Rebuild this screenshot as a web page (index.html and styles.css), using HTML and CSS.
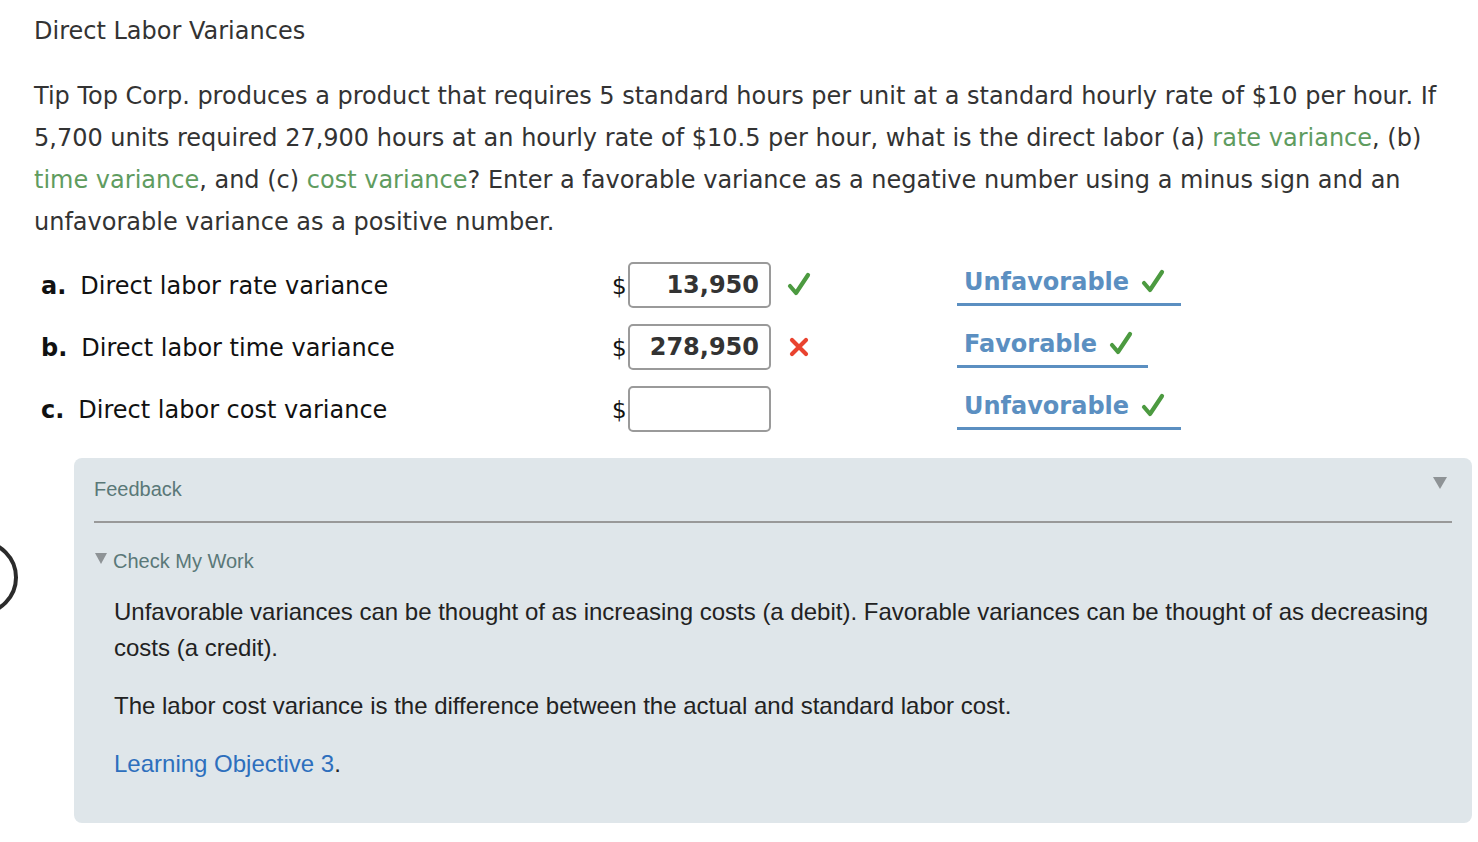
FILE: index.html
```html
<!DOCTYPE html>
<html>
<head>
<meta charset="utf-8">
<link rel="stylesheet" href="styles.css">
</head>
<body>
<div class="page">
  <h1 class="title">Direct Labor Variances</h1>
  <p class="question">Tip Top Corp. produces a product that requires 5 standard hours per unit at a standard hourly rate of $10 per hour. If 5,700 units required 27,900 hours at an hourly rate of $10.5 per hour, what is the direct labor (a) <span class="term">rate variance</span>, (b) <span class="term">time variance</span>, and (c) <span class="term">cost variance</span>? Enter a favorable variance as a negative number using a minus sign and an unfavorable variance as a positive number.</p>

  <div class="rows">
    <div class="row">
      <div class="label"><b>a.</b><span>Direct labor rate variance</span></div>
      <div class="amount"><span class="dollar">$</span><div class="input">13,950</div>
        <svg class="mark" width="24" height="26" viewBox="0 0 24 26"><path d="M3 14 L9 21 L21 3" fill="none" stroke="#4c9a40" stroke-width="4.2" stroke-linecap="round" stroke-linejoin="round"/></svg>
      </div>
      <div class="select wide"><span>Unfavorable</span>
        <svg class="mark" width="24" height="26" viewBox="0 0 24 26"><path d="M3 14 L9 21 L21 3" fill="none" stroke="#4c9a40" stroke-width="4.2" stroke-linecap="round" stroke-linejoin="round"/></svg>
      </div>
    </div>
    <div class="row">
      <div class="label"><b>b.</b><span>Direct labor time variance</span></div>
      <div class="amount"><span class="dollar">$</span><div class="input">278,950</div>
        <svg class="mark" width="24" height="26" viewBox="0 0 24 26"><path d="M5 6 L19 20 M19 6 L5 20" fill="none" stroke="#e9432f" stroke-width="4.2" stroke-linecap="round"/></svg>
      </div>
      <div class="select narrow"><span>Favorable</span>
        <svg class="mark" width="24" height="26" viewBox="0 0 24 26"><path d="M3 14 L9 21 L21 3" fill="none" stroke="#4c9a40" stroke-width="4.2" stroke-linecap="round" stroke-linejoin="round"/></svg>
      </div>
    </div>
    <div class="row">
      <div class="label"><b>c.</b><span>Direct labor cost variance</span></div>
      <div class="amount"><span class="dollar">$</span><div class="input"></div></div>
      <div class="select wide"><span>Unfavorable</span>
        <svg class="mark" width="24" height="26" viewBox="0 0 24 26"><path d="M3 14 L9 21 L21 3" fill="none" stroke="#4c9a40" stroke-width="4.2" stroke-linecap="round" stroke-linejoin="round"/></svg>
      </div>
    </div>
  </div>

  <div class="feedback">
    <div class="fb-head"><span>Feedback</span><span class="tri"></span></div>
    <div class="cmw"><span class="tri small"></span>Check My Work</div>
    <div class="fb-body">
      <p>Unfavorable variances can be thought of as increasing costs (a debit). Favorable variances can be thought of as decreasing costs (a credit).</p>
      <p>The labor cost variance is the difference between the actual and standard labor cost.</p>
      <p><a class="lo" href="#">Learning Objective 3</a>.</p>
    </div>
  </div>
</div>
<div class="ring"></div>
</body>
</html>
```
FILE: styles.css
```css
html, body {
  margin: 0;
  padding: 0;
  background: #fff;
}
.page {
  padding: 14px 6px 0 34px;
  font-family: "DejaVu Sans", Verdana, sans-serif;
  color: #333;
}
.title {
  margin: 0;
  font-size: 24px;
  font-weight: normal;
  line-height: 34px;
}
.question {
  margin: 27px 12px 0 0;
  font-size: 24px;
  line-height: 42px;
}
.term {
  color: #5f9c5f;
}
.rows {
  margin-top: 12px;
}
.row {
  display: flex;
  align-items: center;
  height: 62px;
}
.label {
  width: 578px;
  font-size: 24px;
  color: #111;
  display: flex;
  gap: 14px;
  padding-left: 7px;
  box-sizing: border-box;
}
.amount {
  display: flex;
  align-items: center;
  width: 345px;
  margin-top: -3px;
}
.dollar {
  font-size: 23px;
  color: #111;
  width: 16px;
  margin-top: 3px;
}
.input {
  height: 42px;
  border: 2px solid #9a9a9a;
  border-radius: 5px;
  font-size: 24px;
  font-weight: bold;
  color: #333;
  text-align: right;
  line-height: 42px;
  padding: 0 10px 0 0;
  width: 129px;
}
.mark {
  margin-left: 16px;
  display: block;
}
.select {
  display: flex;
  align-items: center;
  gap: 12px;
  height: 44px;
  padding-left: 7px;
  border-bottom: 3px solid #5b8fc1;
  box-sizing: border-box;
  color: #5b8fc1;
  font-size: 24px;
  font-weight: bold;
  margin-top: -5px;
}
.select .mark { margin-left: 0; }
.select.wide { width: 224px; }
.select.narrow { width: 191px; }
.feedback {
  margin: 17px 0 0 40px;
  background: #dfe6ea;
  border-radius: 8px;
  padding: 0 20px 40px 20px;
  height: 365px;
  box-sizing: border-box;
  font-family: "Liberation Sans", Arial, sans-serif;
}
.fb-head {
  display: flex;
  justify-content: space-between;
  align-items: center;
  height: 63px;
  border-bottom: 2px solid #999;
  color: #5a7878;
  font-size: 20px;
}
.tri {
  width: 0;
  height: 0;
  border-left: 7px solid transparent;
  border-right: 7px solid transparent;
  border-top: 12px solid #8e9396;
  margin-right: 5px;
  margin-top: -14px;
}
.cmw {
  display: flex;
  align-items: center;
  color: #5a7878;
  font-size: 20px;
  margin-top: 27px;
}
.tri.small {
  margin: -6px 6px 0 1px;
  border-left-width: 6px;
  border-right-width: 6px;
  border-top-width: 11px;
}
.fb-body {
  padding-left: 20px;
  color: #222;
  font-size: 24px;
  line-height: 36px;
}
.fb-body p {
  margin: 21px 0 0 0;
}
.fb-body p + p {
  margin-top: 22px;
}
.lo {
  color: #2d6fbd;
  text-decoration: none;
}
.ring {
  position: absolute;
  left: -57px;
  top: 540px;
  width: 67px;
  height: 67px;
  border: 4px solid #2b2b2b;
  border-radius: 50%;
}
```
